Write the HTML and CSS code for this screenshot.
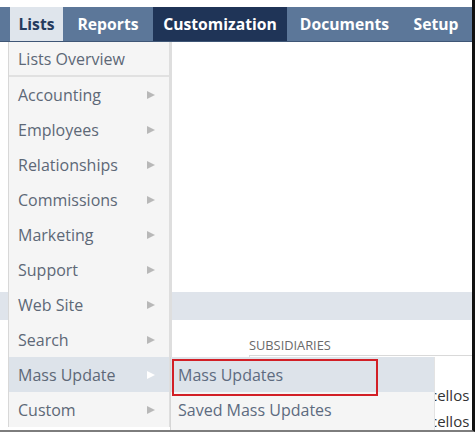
FILE: index.html
```html
<!DOCTYPE html>
<html>
<head>
<meta charset="utf-8">
<link rel="stylesheet" href="styles.css">
</head>
<body>
<div class="frame">
  <nav class="nav">
    <span class="stub"></span>
    <a class="tab tab-active tab-lists">Lists</a>
    <a class="tab tab-reports">Reports</a>
    <a class="tab tab-dark tab-custom">Customization</a>
    <a class="tab tab-docs">Documents</a>
    <a class="tab tab-setup">Setup</a>
  </nav>
  <div class="content">
    <div class="band"></div>
    <div class="section">
      <div class="label">SUBSIDIARIES</div>
      <div class="rows">
        <div class="row"><span class="cell">Marcellos</span></div>
        <div class="row"><span class="cell">Marcellos</span></div>
      </div>
    </div>
  </div>

  <ul class="menu">
    <li class="item item-overview">Lists Overview</li>
    <li class="item">Accounting<span class="arrow"></span></li>
    <li class="item">Employees<span class="arrow"></span></li>
    <li class="item">Relationships<span class="arrow"></span></li>
    <li class="item">Commissions<span class="arrow"></span></li>
    <li class="item">Marketing<span class="arrow"></span></li>
    <li class="item">Support<span class="arrow"></span></li>
    <li class="item">Web Site<span class="arrow"></span></li>
    <li class="item">Search<span class="arrow"></span></li>
    <li class="item item-hover">Mass Update<span class="arrow"></span></li>
    <li class="item">Custom<span class="arrow"></span></li>
  </ul>

  <ul class="submenu">
    <li class="subitem subitem-hover">Mass Updates</li>
    <li class="subitem">Saved Mass Updates</li>
  </ul>
  <div class="callout"></div>
</div>
</body>
</html>
```

FILE: styles.css
```css
html, body {
  margin: 0;
  padding: 0;
  background: #ffffff;
  overflow: hidden;
}
body {
  width: 475px;
  height: 432px;
  font-family: "Open Sans", "Noto Sans", sans-serif;
}
.frame {
  position: relative;
  width: 472px;
  height: 430px;
  border-right: 3px solid #111111;
  border-bottom: 2px solid #7d7d7d;
  overflow: hidden;
  background: #ffffff;
}
.nav {
  margin-top: 7px;
  height: 35px;
  display: flex;
  align-items: stretch;
  background: #5c7799;
  border-bottom: 1px solid #3f5676;
  box-sizing: border-box;
}
.stub {
  width: 10px;
  flex: none;
}
.tab {
  display: flex;
  align-items: center;
  justify-content: center;
  flex: none;
  color: #ffffff;
  font-weight: 700;
  font-size: 15.7px;
  white-space: nowrap;
}
.tab-lists { width: 53px; }
.tab-reports { width: 90px; }
.tab-custom { width: 134px; }
.tab-docs { width: 115px; }
.tab-setup { width: 68px; }
.tab-active {
  background: #dfe5ec;
  color: #253b5d;
}
.tab-dark {
  background: #1f3457;
}
.content {
  display: flex;
  flex-direction: column;
}
.band {
  margin-top: 250px;
  height: 28px;
  background: #dfe4eb;
}
.section {
  padding-left: 249px;
  padding-top: 17px;
}
.label {
  font-size: 12.8px;
  color: #6a6a6a;
  line-height: 17px;
  border-bottom: 1px solid #d9d9d9;
  padding-bottom: 1px;
  margin-right: -10px;
}
.rows {
  border-left: 1px solid #e2e2e2;
  display: flex;
  flex-direction: column;
  padding-top: 26px;
}
.row {
  height: 26px;
  display: flex;
  align-items: center;
  padding-left: 152px;
}
.cell {
  font-size: 15px;
  color: #333333;
  white-space: nowrap;
}
.menu {
  position: absolute;
  left: 8px;
  top: 42px;
  width: 160px;
  margin: 0;
  padding: 0;
  list-style: none;
  background: #f5f5f5;
  border-left: 1px solid #d8d8d8;
  border-right: 3px solid #dedede;
  box-sizing: content-box;
}
.item {
  position: relative;
  height: 35px;
  display: flex;
  align-items: center;
  padding-left: 9px;
  font-size: 16px;
  color: #5d6877;
  white-space: nowrap;
}
.item-overview {
  height: 33px;
  border-bottom: 2px solid #e1e1e1;
}
.item-hover {
  background: #dde3ea;
}
.arrow {
  position: absolute;
  left: 138px;
  top: 14px;
  width: 0;
  height: 0;
  border-top: 4px solid transparent;
  border-bottom: 4px solid transparent;
  border-left: 8px solid #b8b8b8;
}
.item-hover .arrow {
  border-left-color: #ffffff;
}
.submenu {
  position: absolute;
  left: 170px;
  top: 357px;
  width: 263px;
  margin: 0;
  padding: 0 0 6px 0;
  list-style: none;
  background: #f5f5f5;
  border-left: 1px solid #d6d6d6;
  border-right: 1px solid #e3e3e3;
}
.subitem {
  height: 35px;
  display: flex;
  align-items: center;
  padding-left: 7px;
  font-size: 16px;
  color: #5d6b80;
  white-space: nowrap;
}
.subitem-hover {
  background: #dde3ea;
}
.callout {
  position: absolute;
  left: 172px;
  top: 359px;
  width: 202px;
  height: 33px;
  border: 2px solid #d21f26;
}
```
